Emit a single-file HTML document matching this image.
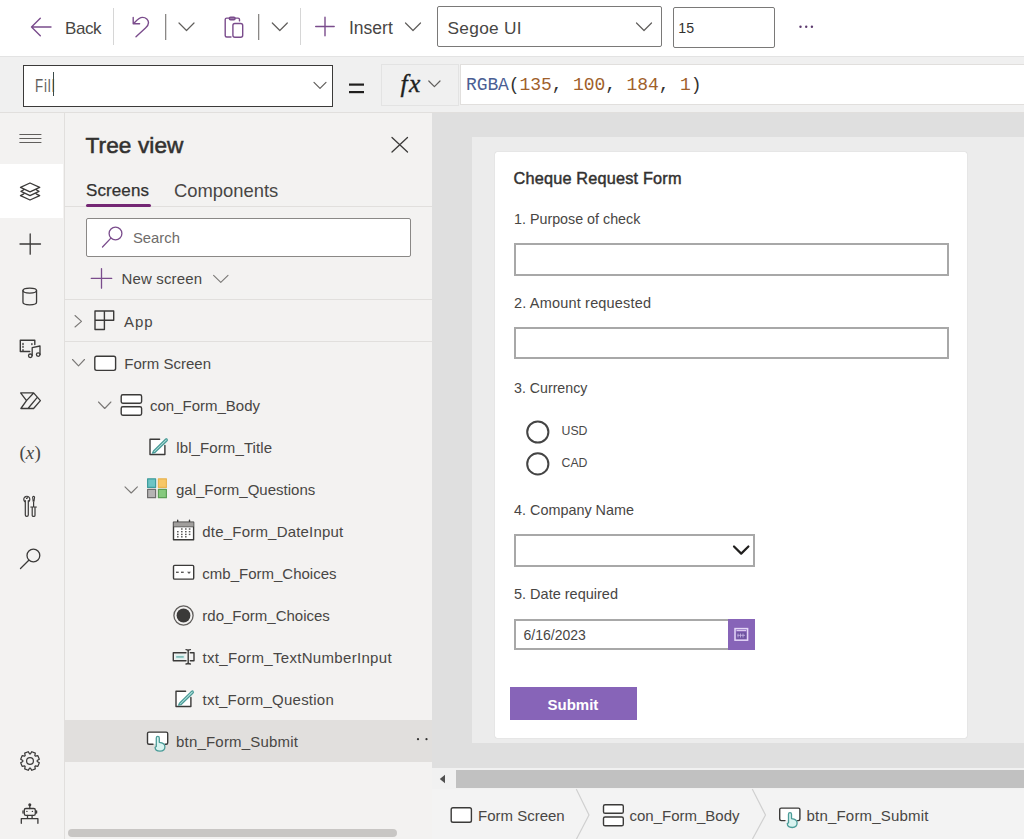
<!DOCTYPE html>
<html><head><meta charset="utf-8">
<style>
html,body{margin:0;padding:0;}
body{width:1024px;height:839px;overflow:hidden;position:relative;background:#fff;font-family:"Liberation Sans",sans-serif;color:#323130;}
.a{position:absolute;}
.t{position:absolute;white-space:nowrap;line-height:1;font-family:"Liberation Sans",sans-serif;}
svg{position:absolute;overflow:visible;}
</style></head><body>

<!-- TOOLBAR -->
<div class="a" style="left:0;top:0;width:1024px;height:56px;background:#fff;"></div>
<div class="a" style="left:0;top:56px;width:1024px;height:1px;background:#e3e3e3;"></div>


<!-- toolbar content -->
<svg width="1024" height="56" style="left:0;top:0" fill="none" stroke-linecap="round" stroke-linejoin="round">
 <g stroke="#7a4c8c" stroke-width="1.4">
  <path d="M31.5 27 H51 M40.3 18.3 L31.5 27 L40.3 35.7"/>
  <path d="M133.2 17.4 V23.7 H139.6 M133.7 23.4 C136.5 20.5 139 17.4 142.5 17.4 C146 17.4 148.5 19.8 148.5 22.8 C148.5 25 147.2 26.5 145.5 28 L136 36.7"/>
  <path d="M231 37 H226.7 Q225.2 37 225.2 35.5 V19.6 Q225.2 18.1 226.7 18.1 H238 Q239.5 18.1 239.5 19.6 V20.9"/>
  <rect x="229.3" y="17.3" width="5.8" height="2.4" rx="1.2"/>
  <rect x="232.9" y="23.5" width="9.8" height="13.8" rx="2"/>
  <path d="M325 17.2 V35.8 M315.7 26.5 H334.2"/>
 </g>
 <g stroke="#605e5c" stroke-width="1.2">
  <path d="M179 23 L186.5 30.5 L194 23"/>
  <path d="M272.3 23 L279.8 30.5 L287.3 23"/>
  <path d="M405.5 23 L413 30.5 L420.5 23"/>
  <path d="M636.5 23 L644 30.5 L651.5 23"/>
 </g>
 <rect x="113" y="8" width="1" height="37" fill="#d6d6d6" stroke="none"/>
 <rect x="165" y="14" width="1.3" height="26" fill="#8a8886" stroke="none"/>
 <rect x="258" y="14" width="1.3" height="26" fill="#8a8886" stroke="none"/>
 <rect x="300" y="8" width="1" height="37" fill="#d6d6d6" stroke="none"/>
 <g fill="#5c3a6e" stroke="none"><circle cx="800.5" cy="26.8" r="1.2"/><circle cx="806.2" cy="26.8" r="1.2"/><circle cx="811.9" cy="26.8" r="1.2"/></g>
</svg>
<div class="a" style="left:437px;top:6px;width:223px;height:39px;border:1px solid #7a7978;border-radius:2px;"></div>
<div class="a" style="left:673px;top:7px;width:100px;height:39px;border:1px solid #7a7978;border-radius:2px;"></div>
<div class="t" style="left:65px;top:20.3px;font-size:17px;letter-spacing:-0.4px;color:#484644;">Back</div>
<div class="t" style="left:349px;top:20.1px;font-size:17.5px;color:#484644;">Insert</div>
<div class="t" style="left:447.5px;top:19.6px;font-size:17.3px;color:#484644;letter-spacing:0.3px;">Segoe UI</div>
<div class="t" style="left:678.3px;top:20.8px;font-size:14.2px;color:#323130;">15</div>

<!-- FORMULA BAR -->
<div class="a" style="left:0;top:57px;width:1024px;height:55px;background:#f0f0f0;"></div>
<div class="a" style="left:0;top:112px;width:1024px;height:1px;background:#e1dfdd;"></div>


<!-- formula content -->
<div class="a" style="left:22.5px;top:65px;width:308px;height:40px;background:#fff;border:1px solid #3b3a39;"></div>
<div class="t" style="left:34.8px;top:76.5px;font-size:18px;letter-spacing:1.2px;color:#605e5c;transform:scaleX(0.74);transform-origin:0 0;">Fill</div>
<div class="a" style="left:53px;top:72px;width:1.3px;height:24px;background:#3b4a4a;"></div>
<div class="a" style="left:381px;top:64px;width:76px;height:40px;background:#f0f0f0;border:1px solid #e3e3e3;"></div>
<div class="a" style="left:460px;top:64px;width:570px;height:39px;background:#fff;border:1px solid #e1dfdd;"></div>
<svg width="1024" height="120" style="left:0;top:0" fill="none" stroke-linecap="round" stroke-linejoin="round">
 <g stroke="#605e5c" stroke-width="1.2">
  <path d="M314 82.3 L320 88.3 L326 82.3"/>
  <path d="M428.8 81 L434.4 86.6 L440 81"/>
 </g>
 <rect x="349" y="83.5" width="15" height="2.2" fill="#201f1e" stroke="none"/>
 <rect x="349" y="91" width="15" height="2.2" fill="#201f1e" stroke="none"/>
</svg>
<div class="t" style="left:400.5px;top:70.5px;font-size:25.5px;font-family:'Liberation Serif',serif;font-style:italic;color:#201f1e;-webkit-text-stroke:0.35px #201f1e;">f<span style="margin-left:1.5px">x</span></div>
<div class="t" style="left:466px;top:76px;font-size:18px;font-family:'Liberation Mono',monospace;letter-spacing:-0.1px;color:#323130;"><span style="color:#4b5e94">RGBA</span>(<span style="color:#a0602a">135</span>, <span style="color:#a0602a">100</span>, <span style="color:#a0602a">184</span>, <span style="color:#a0602a">1</span>)</div>

<!-- LEFT RAIL -->
<div class="a" style="left:0;top:113px;width:64px;height:726px;background:#f3f2f1;"></div>
<div class="a" style="left:64px;top:113px;width:1px;height:726px;background:#e1dfdd;"></div>
<div class="a" style="left:0;top:164px;width:63px;height:54px;background:#fff;"></div>


<!-- rail icons -->
<svg width="64" height="839" style="left:0;top:0" fill="none" stroke="#3b3a39" stroke-width="1.3" stroke-linecap="round" stroke-linejoin="round">
 <path d="M19.8 134.5 H41 M19.8 138.5 H41 M19.8 142.5 H41" stroke="#605e5c" stroke-width="1.1"/>
 <path d="M20.5 187.4 L30 183 L39.7 187.4 L30 191.8 Z M23.8 189.7 L21 191.4 L30 195.7 L39 191.4 L36.2 189.7 M23.8 193.9 L20.5 195.6 L30 200 L39.7 195.6 L36.2 193.9"/>
 <path d="M30.2 234 V254.2 M20 244 H40.5"/>
 <ellipse cx="29.75" cy="290.6" rx="6.8" ry="2.5"/>
 <path d="M22.95 290.6 V302.3 Q22.95 304.8 29.75 304.8 Q36.55 304.8 36.55 302.3 V290.6"/>
 <path d="M34.8 344.5 V340.3 H20.3 V351.5 H29.8 M23 343.5 V344.5 M23 346.5 V347.2 M23 349.8 V350.5 M31.9 343.8 V344.5" stroke-width="1.4"/>
 <path d="M32.2 355.5 V347.6 L40 346 V354.5" stroke-width="1.3"/>
 <circle cx="30.3" cy="355.8" r="1.8"/><circle cx="38.2" cy="354.6" r="1.8"/>
 <path d="M20.6 392.9 H33.6 L40.4 400.6 L33.6 408.5 H20.9 L26.5 400.6 Z M33.4 393.3 L26.5 400.6 M37.1 397.6 L28 408.5" stroke-width="1.3"/>
 <path d="M25.3 500.5 V515 Q25.3 516.4 26.8 516.4 Q28.3 516.4 28.3 515 V500.5" stroke-width="1.2"/>
 <path d="M24.8 501.5 A3 3 0 1 1 28.8 501.5" stroke-width="1.2"/>
 <path d="M26 497.5 L26.8 499 L27.6 497.5" stroke-width="1"/>
 <path d="M33.6 502 V507 M30.8 507 H36.4 M32.2 507 V515.5 Q32.2 516.4 33.6 516.4 Q35 516.4 35 515.5 V507" stroke-width="1.2"/>
 <path d="M32.6 497 Q33.6 495.8 34.6 497 L34 501.3 H33.2 Z" stroke-width="1.1"/>
 <circle cx="33.4" cy="555.5" r="6.4"/>
 <path d="M28.8 560.3 L20.5 568.5"/>
 <path d="M37.19 761.38 L39.32 762.82 L37.88 766.31 L35.35 765.82 L34.82 766.35 L35.31 768.88 L31.82 770.32 L30.38 768.19 L29.62 768.19 L28.18 770.32 L24.69 768.88 L25.18 766.35 L24.65 765.82 L22.12 766.31 L20.68 762.82 L22.81 761.38 L22.81 760.62 L20.68 759.18 L22.12 755.69 L24.65 756.18 L25.18 755.65 L24.69 753.12 L28.18 751.68 L29.62 753.81 L30.38 753.81 L31.82 751.68 L35.31 753.12 L34.82 755.65 L35.35 756.18 L37.88 755.69 L39.32 759.18 L37.19 760.62Z" stroke-width="1.2"/>
 <circle cx="30" cy="761" r="3.4" stroke-width="1.2"/>
 <rect x="24.3" y="808.5" width="11" height="6.8" rx="1.6" stroke-width="1.3"/>
 <path d="M29.8 808.5 V805.2 M27.5 815.3 V818.2 M32.1 815.3 V818.2 M21.3 823.3 V818.6 H37.9 V823.3 M23 810.8 V813 M36.6 810.8 V813" stroke-width="1.3"/>
 <circle cx="29.8" cy="804.8" r="0.9" fill="#3b3a39"/>
 <circle cx="26.9" cy="811.4" r="0.7" fill="#3b3a39" stroke="none"/><circle cx="32.4" cy="811.4" r="0.7" fill="#3b3a39" stroke="none"/>
</svg>
<div class="t" style="left:19.5px;top:443px;font-size:19px;font-family:'Liberation Serif',serif;color:#484644;">(<i style="letter-spacing:0.3px">x</i>)</div>

<!-- TREE PANEL -->
<div class="a" style="left:65px;top:113px;width:367px;height:726px;background:#f3f2f1;"></div>


<!-- tree content -->
<div class="a" style="left:65px;top:720px;width:367px;height:42px;background:#e1dfdd;"></div>
<div class="a" style="left:65px;top:206px;width:367px;height:1px;background:#e1dfdd;"></div>
<div class="a" style="left:65px;top:299px;width:367px;height:1px;background:#e1dfdd;"></div>
<div class="a" style="left:65px;top:341px;width:367px;height:1px;background:#e1dfdd;"></div>
<div class="a" style="left:85.5px;top:203.5px;width:65px;height:3px;background:#742774;border-radius:1.5px;"></div>
<div class="a" style="left:86px;top:218px;width:323px;height:37px;background:#fff;border:1px solid #8a8886;border-radius:2px;"></div>
<div class="a" style="left:67.5px;top:829px;width:329px;height:7.5px;background:#c8c6c4;border-radius:4px;"></div>
<svg width="440" height="839" style="left:0;top:0" fill="none" stroke="#3b3a39" stroke-width="1.3" stroke-linecap="round" stroke-linejoin="round">
 <path d="M392 137.5 L407.5 152 M407.5 137.5 L392 152" stroke-width="1.3"/>
 <g stroke="#7a4c8c" stroke-width="1.3">
  <circle cx="115.5" cy="233.5" r="6.4"/>
  <path d="M110.9 238.1 L102.5 247"/>
  <path d="M101.5 268.6 V288.2 M91.3 278.4 H111.7"/>
 </g>
 <g stroke="#7a7876" stroke-width="1.1">
  <path d="M213.6 275.3 L220.8 282.3 L228 275.3"/>
  <path d="M75 315.5 L81.5 321.3 L75 327"/>
  <path d="M72.5 359.5 L78.5 365.8 L84.5 359.5"/>
  <path d="M98.5 402 L104.7 408.5 L110.9 402"/>
  <path d="M125 486.8 L131.2 493 L137.4 486.8"/>
 </g>
 <g stroke="#3b3a39" stroke-width="1.4">
  <path d="M95 311 H113.7 V320.2 H95 M95 311 V329.5 H104.4 V311"/>
  <rect x="94.8" y="356.2" width="20.8" height="14.2" rx="1.8" fill="#fff"/>
  <rect x="121.2" y="394.8" width="20.4" height="8.4" rx="1.6" fill="#fff"/>
  <rect x="121.2" y="406.8" width="20.4" height="8.4" rx="1.6" fill="#fff"/>
  <rect x="150.5" y="439.8" width="14" height="14.2" fill="#fff" stroke="none"/><path d="M159.6 439.3 H150 V454.5 H164.9 V445.5"/>
  <rect x="174" y="526.6" width="19" height="12.6" fill="#fff" stroke="none"/><path d="M173.5 530.5 V539.7 H193.6 V522.3 H173.5 V530.5 M173.5 526.6 H193.6 M177.7 520.3 V523.5 M189.5 520.3 V523.5"/>
  <rect x="173.5" y="565.4" width="20.2" height="13.7" rx="1.2" fill="#fff"/>
  <path d="M186 652.8 H173.3 V660.8 H186 M190.3 652.8 H194 V660.8 H190.3 M188.2 650 V663.7 M186 649.6 Q188.2 649.6 188.2 651 Q188.2 649.6 190.4 649.6 M186 664 Q188.2 664 188.2 662.6 Q188.2 664 190.4 664"/>
  <rect x="176.5" y="691.8" width="14" height="14.2" fill="#fff" stroke="none"/><path d="M185.6 691.3 H176 V706.5 H190.9 V697.5"/>
  <rect x="148" y="732.6" width="19.2" height="11.2" fill="#fff" stroke="none"/><path d="M153 744.3 H149 Q147.5 744.3 147.5 742.8 V733.6 Q147.5 732.1 149 732.1 H166.2 Q167.7 732.1 167.7 733.6 V742.8 Q167.7 744.3 166.2 744.3 H165"/>
 </g>
 <rect x="173.6" y="522.3" width="20" height="4.3" fill="#a19f9d" stroke="none"/>
 <g fill="#5a5958" stroke="none">
  <rect x="181" y="528.3" width="1.6" height="1.4"/><rect x="185" y="528.3" width="1.6" height="1.4"/><rect x="188.8" y="528.3" width="1.6" height="1.4"/>
  <rect x="177" y="531" width="1.6" height="1.4"/><rect x="181" y="531" width="1.6" height="1.4"/><rect x="185" y="531" width="1.6" height="1.4"/><rect x="188.8" y="531" width="1.6" height="1.4"/>
  <rect x="177" y="533.7" width="1.6" height="1.4"/><rect x="181" y="533.7" width="1.6" height="1.4"/><rect x="185" y="533.7" width="1.6" height="1.4"/><rect x="188.8" y="533.7" width="1.6" height="1.4"/>
  <rect x="177" y="536.1" width="1.6" height="1.4"/><rect x="181" y="536.1" width="1.6" height="1.4"/><rect x="185" y="536.1" width="1.6" height="1.4"/>
  <rect x="176" y="571.6" width="2.7" height="1.4"/><rect x="181" y="571.6" width="2.7" height="1.4"/>
  <path d="M187 571.8 H191 L189 574 Z"/>
 </g>
 <rect x="176.2" y="656" width="7.5" height="1.8" fill="#3d8f8a" stroke="none"/>
 <rect x="175.2" y="654.4" width="9.5" height="5" fill="#c8ecea" stroke="none" opacity="0.5"/>
 <circle cx="183.5" cy="615.5" r="9.6" stroke="#605e5c" stroke-width="1.3"/>
 <circle cx="183.5" cy="615.5" r="6.9" fill="#3b3a39" stroke="none"/>
 <g stroke="#a8a8a8" stroke-width="1.2">
  <rect x="147.6" y="478.8" width="8" height="8.6" fill="#6cc4c4" stroke="#3f9c9c"/>
  <rect x="158.4" y="478.8" width="8" height="8.6" fill="#f7c766" stroke="#e8b452"/>
  <rect x="147.6" y="489.4" width="8" height="8.3" fill="#b5b3b3" stroke="#6e6d6d"/>
  <rect x="158.4" y="489.4" width="8" height="8.3" fill="#86c97e" stroke="#5c9e56"/>
 </g>
 <g stroke="#4b9c98" stroke-width="1.3" fill="#bfeae6">
  <path d="M153.5 451 L165.5 439.2 Q166.6 438.3 167.2 439.3 Q167.8 440.2 166.8 441 L154.9 452.5 L152.6 453 Z"/>
  <path d="M179.5 703.2 L191.5 691.4 Q192.6 690.5 193.2 691.5 Q193.8 692.4 192.8 693.2 L180.9 704.7 L178.6 705.2 Z"/>
  <path d="M156.3 746.5 V738 Q156.3 736.4 157.8 736.4 Q159.3 736.4 159.3 738 V742.3 Q164.9 742.8 164.9 746.8 Q164.9 751.2 160 751.2 Q155.1 751.2 155.1 747.3 Z" fill="#d8f3f0"/>
 </g>
 <circle cx="418" cy="739.2" r="1.1" fill="#323130" stroke="none"/><circle cx="426.5" cy="739.2" r="1.1" fill="#323130" stroke="none"/>
</svg>
<div class="t" style="left:85.5px;top:135.1px;font-size:22.6px;color:#323130;-webkit-text-stroke:0.55px #323130;letter-spacing:0.1px;">Tree view</div>
<div class="t" style="left:86px;top:182.0px;font-size:17px;color:#323130;letter-spacing:0.1px;-webkit-text-stroke:0.25px #323130;">Screens</div>
<div class="t" style="left:174px;top:181.6px;font-size:18.4px;color:#484644;">Components</div>
<div class="t" style="left:133px;top:230.5px;font-size:14.8px;color:#6e6c6a;">Search</div>
<div class="t" style="left:121.5px;top:271.3px;font-size:15px;color:#484644;letter-spacing:0.15px;">New screen</div>
<div class="t" style="left:124px;top:314.4px;font-size:15px;color:#484644;letter-spacing:0.9px;">App</div>
<div class="t" style="left:124.3px;top:356.4px;font-size:15px;color:#484644;">Form Screen</div>
<div class="t" style="left:150px;top:398.4px;font-size:15px;color:#484644;">con_Form_Body</div>
<div class="t" style="left:176.3px;top:440.4px;font-size:15px;color:#484644;letter-spacing:0.1px;">lbl_Form_Title</div>
<div class="t" style="left:176px;top:482.4px;font-size:15px;color:#484644;">gal_Form_Questions</div>
<div class="t" style="left:202.3px;top:524.4px;font-size:15px;color:#484644;letter-spacing:0.2px;">dte_Form_DateInput</div>
<div class="t" style="left:202.3px;top:566.4px;font-size:15px;color:#484644;">cmb_Form_Choices</div>
<div class="t" style="left:202.3px;top:608.4px;font-size:15px;color:#484644;">rdo_Form_Choices</div>
<div class="t" style="left:202.5px;top:650.4px;font-size:15px;color:#484644;letter-spacing:0.32px;">txt_Form_TextNumberInput</div>
<div class="t" style="left:202.5px;top:692.4px;font-size:15px;color:#484644;letter-spacing:0.23px;">txt_Form_Question</div>
<div class="t" style="left:176px;top:734.4px;font-size:15px;color:#484644;letter-spacing:0.2px;">btn_Form_Submit</div>

<!-- CANVAS -->
<div class="a" style="left:432px;top:113px;width:592px;height:655px;background:#dfdfdf;"></div>
<div class="a" style="left:472px;top:137px;width:552px;height:606px;background:#ececec;"></div>
<div class="a" style="left:495px;top:152px;width:472px;height:586px;background:#fff;border-radius:2px;box-shadow:0 0 1px rgba(0,0,0,0.25);"></div>


<!-- form content -->
<div class="a" style="left:514px;top:243px;width:431px;height:29px;border:2px solid #a8a8a8;"></div>
<div class="a" style="left:514px;top:327px;width:431px;height:28px;border:2px solid #a8a8a8;"></div>
<div class="a" style="left:514px;top:534px;width:237px;height:29px;border:2px solid #a8a8a8;"></div>
<div class="a" style="left:514px;top:619px;width:237px;height:27px;border:2px solid #a8a8a8;"></div>
<div class="a" style="left:728px;top:618.5px;width:27px;height:31.5px;background:#8764b8;"></div>
<div class="a" style="left:510px;top:687px;width:127px;height:33px;background:#8764b8;"></div>
<svg width="1024" height="839" style="left:0;top:0" fill="none">
 <circle cx="537.8" cy="432" r="10.6" stroke="#444" stroke-width="2"/>
 <circle cx="537.8" cy="463.9" r="10.6" stroke="#444" stroke-width="2"/>
 <path d="M734 546.5 L741.2 553.6 L748.4 546.5" stroke="#201f1e" stroke-width="2.2" stroke-linecap="round" stroke-linejoin="round"/>
 <rect x="735" y="628.6" width="12.6" height="11.6" stroke="#e4d6f7" stroke-width="1.5"/>
 <path d="M736.5 630.6 H746.2" stroke="#e4d6f7" stroke-width="1"/>
 <rect x="736.4" y="632.2" width="9.8" height="6.6" fill="#6e54a0" stroke="none"/>
 <path d="M738 633.5 V637.5 M740.5 633.5 V637.5 M743 633.5 V637.5 M737.3 635.3 H745" stroke="#cbb9ea" stroke-width="0.8"/>
</svg>
<div class="t" style="left:513.5px;top:170.4px;font-size:16.3px;color:#323130;-webkit-text-stroke:0.45px #323130;letter-spacing:0.18px;">Cheque Request Form</div>
<div class="t" style="left:514px;top:212.1px;font-size:14.3px;color:#484644;">1. Purpose of check</div>
<div class="t" style="left:514px;top:295.5px;font-size:14.5px;color:#484644;letter-spacing:0.18px;">2. Amount requested</div>
<div class="t" style="left:514px;top:380.8px;font-size:14.2px;color:#484644;">3. Currency</div>
<div class="t" style="left:514px;top:502.8px;font-size:14.4px;color:#484644;">4. Company Name</div>
<div class="t" style="left:514px;top:587.1px;font-size:14.5px;color:#484644;">5. Date required</div>
<div class="t" style="left:561.5px;top:425.3px;font-size:12.3px;color:#4a4948;">USD</div>
<div class="t" style="left:561.5px;top:456.7px;font-size:12.3px;color:#4a4948;">CAD</div>
<div class="t" style="left:523.5px;top:628.4px;font-size:14px;color:#484644;">6/16/2023</div>
<div class="t" style="left:547.5px;top:696.7px;font-size:15px;color:#ffffff;font-weight:bold;">Submit</div>

<!-- SCROLLBAR -->
<div class="a" style="left:432px;top:768px;width:592px;height:21px;background:#f1f1f1;"></div>
<div class="a" style="left:456px;top:770px;width:568px;height:18px;background:#c1c1c1;"></div>

<!-- BREADCRUMB -->
<div class="a" style="left:432px;top:789px;width:592px;height:50px;background:#f3f3f3;"></div>


<!-- breadcrumb content -->
<svg width="1024" height="839" style="left:0;top:0" fill="none" stroke-linecap="round" stroke-linejoin="round">
 <path d="M445 774.8 L439.8 779 L445 783.3 Z" fill="#505050" stroke="none"/>
 <path d="M576.5 789.5 L589 815 L576.5 839" stroke="#d0d0d0" stroke-width="1.2"/>
 <path d="M752.5 789.5 L765.5 815 L752.5 839" stroke="#d0d0d0" stroke-width="1.2"/>
 <g stroke="#3b3a39" stroke-width="1.4">
  <rect x="451.2" y="807.7" width="20.2" height="14.6" rx="1.8" fill="#fff"/>
  <rect x="603.5" y="804.7" width="19.8" height="8.6" rx="1.6" fill="#fff"/>
  <rect x="603.5" y="817" width="19.8" height="8.8" rx="1.6" fill="#fff"/>
  <rect x="780.2" y="808.6" width="19.2" height="11.5" fill="#fff" stroke="none"/><path d="M785 820.6 H781.2 Q779.7 820.6 779.7 819.1 V809.6 Q779.7 808.1 781.2 808.1 H798.4 Q799.9 808.1 799.9 809.6 V819.1 Q799.9 820.6 798.4 820.6 H797.5"/>
 </g>
 <g stroke="#4b9c98" stroke-width="1.3" fill="#d8f3f0">
  <path d="M788.5 822.8 V814.3 Q788.5 812.7 790 812.7 Q791.5 812.7 791.5 814.3 V818.6 Q797.1 819.1 797.1 823.1 Q797.1 827.5 792.2 827.5 Q787.3 827.5 787.3 823.6 Z"/>
 </g>
</svg>
<div class="t" style="left:478px;top:808.4px;font-size:15px;color:#484644;">Form Screen</div>
<div class="t" style="left:629.5px;top:808.4px;font-size:15px;color:#484644;">con_Form_Body</div>
<div class="t" style="left:806.5px;top:808.4px;font-size:15px;color:#484644;letter-spacing:0.2px;">btn_Form_Submit</div>

</body></html>
